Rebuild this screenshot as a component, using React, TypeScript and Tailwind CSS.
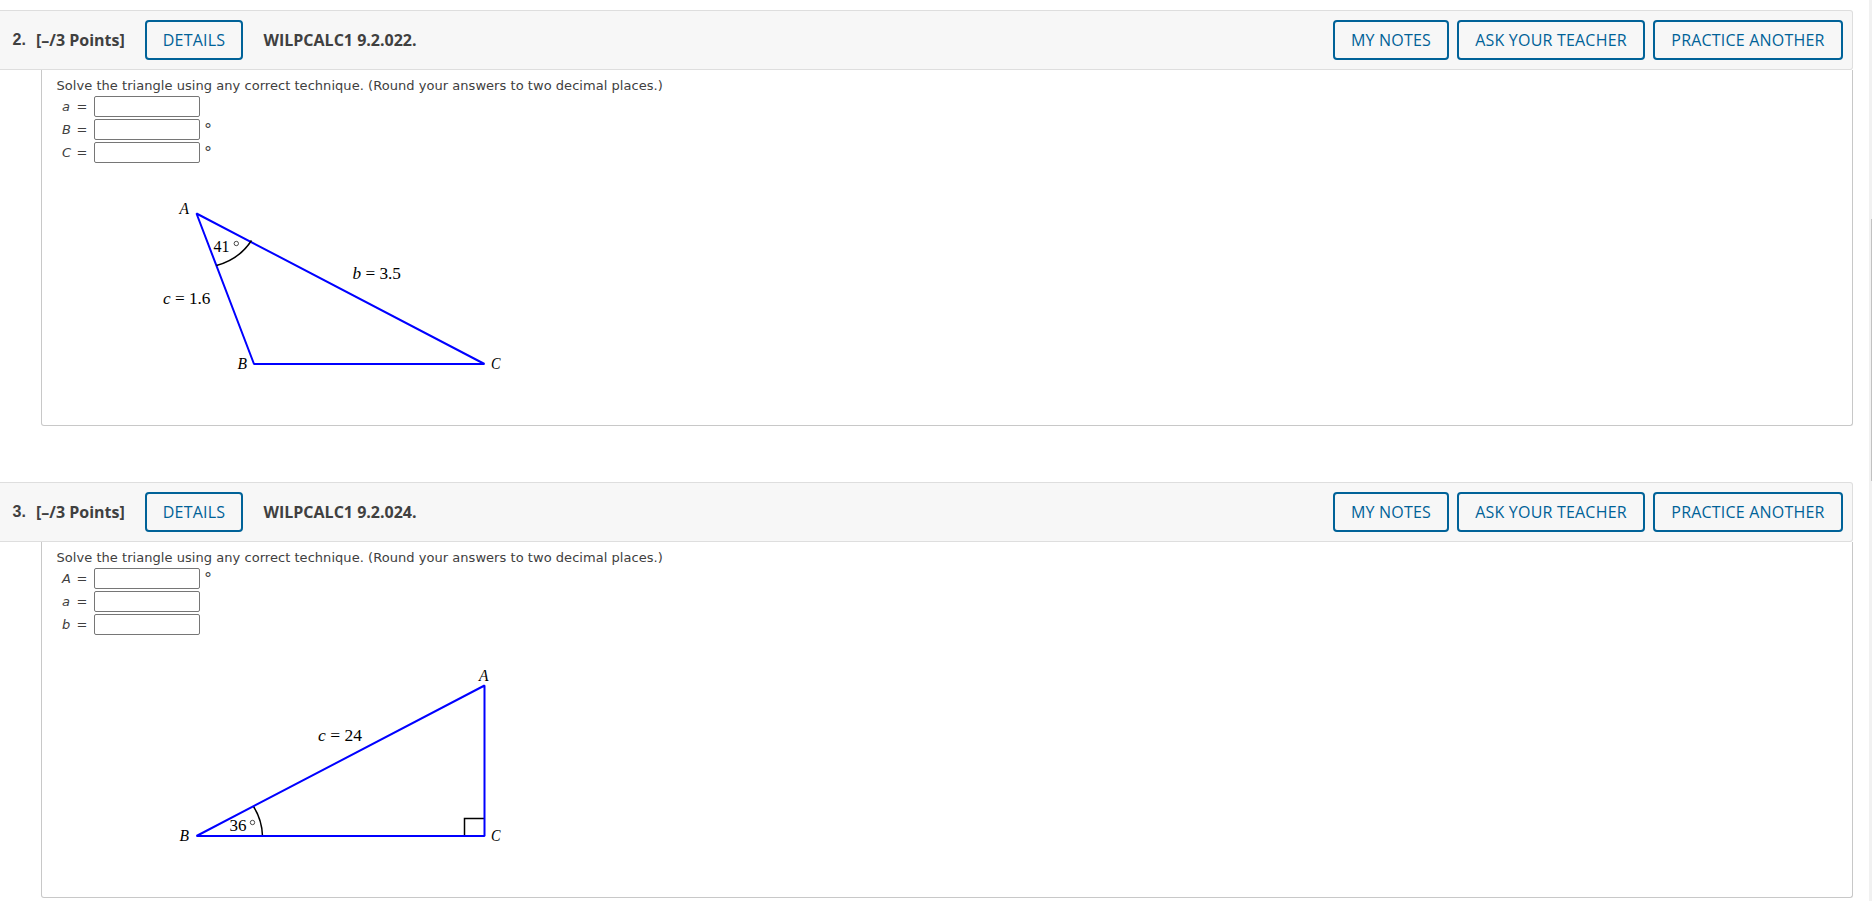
import * as React from 'react';

interface Answer {
  name: string;
  degrees?: boolean;
}

interface QuestionProps {
  number: number;
  code: string;
  answers: Answer[];
  children: React.ReactNode;
}

interface LabelProps {
  x: number;
  y: number;
  width: number;
  children: React.ReactNode;
}

function HeaderButton({ label, className }: { label: string; className: string }) {
  return (
    <button
      className={`h-10 shrink-0 rounded-[4px] border-2 border-[#006298] text-base font-medium tracking-[0.2px] whitespace-nowrap text-[#006298] cursor-pointer ${className}`}
    >
      {label}
    </button>
  );
}

// Figure label, stretched to a fixed width
function Label({ x, y, width, children }: LabelProps) {
  return (
    <text x={x} y={y} textLength={width} lengthAdjust="spacingAndGlyphs">
      {children}
    </text>
  );
}

function Figure({ viewBox, children }: { viewBox: string; children: React.ReactNode }) {
  return (
    <svg
      width="400"
      height="220"
      viewBox={viewBox}
      className="mt-[27px] ml-[84px] fill-black font-['Liberation_Serif',serif] text-[16px]"
    >
      {children}
    </svg>
  );
}

function Question({ number, code, answers, children }: QuestionProps) {
  return (
    <section className="w-[1853px]">
      {/* Question header */}
      <header className="flex h-[60px] items-center rounded-r-[3px] border border-l-0 border-[#dedede] bg-[#f7f7f7] pr-[9px] font-['Open_Sans',sans-serif] text-base font-bold text-[#404040]">
        <span className="w-[36px] pl-[12.5px] font-['Liberation_Sans',sans-serif]">{number}.</span>
        <span className="w-[109px] whitespace-nowrap">[–/3 Points]</span>
        <HeaderButton label="DETAILS" className="w-[98px]" />
        <span className="ml-[20.5px]">{code}</span>
        <div className="ml-auto flex gap-2">
          <HeaderButton label="MY NOTES" className="w-[116px]" />
          <HeaderButton label="ASK YOUR TEACHER" className="w-[188px]" />
          <HeaderButton label="PRACTICE ANOTHER" className="w-[190px]" />
        </div>
      </header>

      {/* Question body */}
      <div className="ml-[41px] h-[356px] rounded-b-[3px] border border-t-0 border-[#c8c8c8] pt-[7px] pl-[14px] font-['DejaVu_Sans',Verdana,sans-serif] text-[13px] text-[#404040]">
        <p className="h-[19px] pl-[0.5px] leading-[18px] tracking-[0.045px] whitespace-nowrap">
          Solve the triangle using any correct technique. (Round your answers to two decimal places.)
        </p>
        <div className="flex flex-col gap-[2px]">
          {answers.map((answer) => (
            <label key={answer.name} className="flex h-[21px] items-center">
              <i className="w-[20.5px] pl-[6px]">{answer.name}</i>
              <span className="w-[17.5px]">=</span>
              <input className="h-[21px] w-[106px] rounded-[2px] border border-[#767676] bg-white" />
              {answer.degrees && <span className="ml-[4px] pt-px text-[16px] leading-none">°</span>}
            </label>
          ))}
        </div>
        {children}
      </div>
    </section>
  );
}

export default function App() {
  return (
    <div className="flex h-[901px] justify-between overflow-hidden bg-white">
      <main className="flex flex-col gap-14 pt-[10px]">
        <Question
          number={2}
          code="WILPCALC1 9.2.022."
          answers={[{ name: 'a' }, { name: 'B', degrees: true }, { name: 'C', degrees: true }]}
        >
          <Figure viewBox="140 190 400 220">
            <path d="M196.5 213.5 254 364H484.5Z" fill="none" stroke="#0000ff" strokeWidth="2" strokeLinejoin="bevel" />
            <path d="M251.5 240.5Q239 259.5 216.5 265.5" fill="none" stroke="#000" strokeWidth="1.5" />
            <Label x={179.5} y={214} width={9.5}><tspan fontStyle="italic">A</tspan></Label>
            <Label x={237.5} y={369} width={9.5}><tspan fontStyle="italic">B</tspan></Label>
            <Label x={491} y={369} width={9.5}><tspan fontStyle="italic">C</tspan></Label>
            <Label x={163} y={304} width={47.5}><tspan fontStyle="italic">c</tspan> = 1.6</Label>
            <Label x={352.5} y={279} width={48.5}><tspan fontStyle="italic">b</tspan> = 3.5</Label>
            <Label x={213.5} y={252} width={16}>41</Label>
            <circle cx="236.3" cy="243.5" r="2.2" fill="none" stroke="#000" strokeWidth="0.7" />
          </Figure>
        </Question>
        <Question
          number={3}
          code="WILPCALC1 9.2.024."
          answers={[{ name: 'A', degrees: true }, { name: 'a' }, { name: 'b' }]}
        >
          <Figure viewBox="140 662 400 220">
            <path d="M253.5 806.5Q262 820 262.5 836M464.5 836V818.5H484.5" fill="none" stroke="#000" strokeWidth="1.5" />
            <path d="M196.5 836 484.5 685.5V836Z" fill="none" stroke="#0000ff" strokeWidth="2" strokeLinejoin="bevel" />
            <Label x={479} y={681} width={9.5}><tspan fontStyle="italic">A</tspan></Label>
            <Label x={179.5} y={841} width={9.5}><tspan fontStyle="italic">B</tspan></Label>
            <Label x={491} y={841} width={9.5}><tspan fontStyle="italic">C</tspan></Label>
            <Label x={318} y={741} width={44}><tspan fontStyle="italic">c</tspan> = 24</Label>
            <Label x={229.5} y={831} width={17}>36</Label>
            <circle cx="252.5" cy="822.5" r="2.2" fill="none" stroke="#000" strokeWidth="0.7" />
          </Figure>
        </Question>
      </main>
      {/* Scrollbar */}
      <div className="flex w-[3px] justify-end bg-[#f1f1f1] pt-[219px]">
        <div className="h-[262px] w-px bg-[#c1c1c1]" />
      </div>
    </div>
  );
}
